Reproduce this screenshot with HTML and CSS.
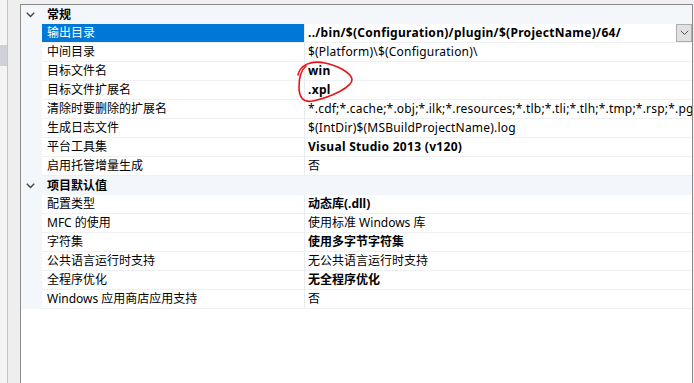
FILE: index.html
```html
<!DOCTYPE html>
<html lang="zh-CN">
<head>
<meta charset="utf-8">
<title>属性页</title>
<link rel="stylesheet" href="styles.css">
</head>
<body>
<div class="app">
  <div class="rail"><div class="rail-sel"></div></div>
  <div class="strip"></div>
  <div class="panel">
    <div class="group">
      <span class="gutter"><svg class="chev" width="9" height="6" viewBox="0 0 9 6"><path d="M0.8 0.8 L4.5 4.6 L8.2 0.8" fill="none" stroke="#444" stroke-width="1.4"/></svg></span>
      <span class="group-label">常规</span>
    </div>
    <div class="row selected">
      <span class="gutter"></span>
      <span class="name">输出目录</span>
      <span class="value"><span class="vtext b lat">../bin/$(Configuration)/plugin/$(ProjectName)/64/</span><span class="drop"><svg width="9" height="6" viewBox="0 0 9 6"><path d="M0.8 0.8 L4.5 4.5 L8.2 0.8" fill="none" stroke="#555" stroke-width="1"/></svg></span></span>
    </div>
    <div class="row"><span class="gutter"></span><span class="name">中间目录</span><span class="value"><span class="vtext lat">$(Platform)\$(Configuration)\</span></span></div>
    <div class="row"><span class="gutter"></span><span class="name">目标文件名</span><span class="value"><span class="vtext b lat">win</span></span></div>
    <div class="row"><span class="gutter"></span><span class="name">目标文件扩展名</span><span class="value"><span class="vtext b lat">.xpl</span></span></div>
    <div class="row"><span class="gutter"></span><span class="name">清除时要删除的扩展名</span><span class="value"><span class="vtext lat">*.cdf;*.cache;*.obj;*.ilk;*.resources;*.tlb;*.tli;*.tlh;*.tmp;*.rsp;*.pgc;*.pgd;*.meta;$(TargetPath)</span></span></div>
    <div class="row"><span class="gutter"></span><span class="name">生成日志文件</span><span class="value"><span class="vtext lat">$(IntDir)$(MSBuildProjectName).log</span></span></div>
    <div class="row"><span class="gutter"></span><span class="name">平台工具集</span><span class="value"><span class="vtext b lat">Visual Studio 2013 (v120)</span></span></div>
    <div class="row"><span class="gutter"></span><span class="name">启用托管增量生成</span><span class="value"><span class="vtext">否</span></span></div>
    <div class="group">
      <span class="gutter"><svg class="chev" width="9" height="6" viewBox="0 0 9 6"><path d="M0.8 0.8 L4.5 4.6 L8.2 0.8" fill="none" stroke="#444" stroke-width="1.4"/></svg></span>
      <span class="group-label">项目默认值</span>
    </div>
    <div class="row"><span class="gutter"></span><span class="name">配置类型</span><span class="value"><span class="vtext b">动态库(.dll)</span></span></div>
    <div class="row"><span class="gutter"></span><span class="name">MFC 的使用</span><span class="value"><span class="vtext">使用标准 Windows 库</span></span></div>
    <div class="row"><span class="gutter"></span><span class="name">字符集</span><span class="value"><span class="vtext b">使用多字节字符集</span></span></div>
    <div class="row"><span class="gutter"></span><span class="name">公共语言运行时支持</span><span class="value"><span class="vtext">无公共语言运行时支持</span></span></div>
    <div class="row"><span class="gutter"></span><span class="name">全程序优化</span><span class="value"><span class="vtext b">无全程序优化</span></span></div>
    <div class="row"><span class="gutter"></span><span class="name">Windows 应用商店应用支持</span><span class="value"><span class="vtext">否</span></span></div>
  </div>
  <svg class="annot" width="694" height="383" viewBox="0 0 694 383"><path d="M298 75 C300 65 311 60 325 63 C338 66 350 72 352 79 C353 87 331 97 313 101 C303 103 299 97 299 87 C299 79 301 70 306 66" fill="none" stroke="#e5141b" stroke-width="1.6" stroke-linecap="round"/></svg>
</div>
</body>
</html>
```

FILE: styles.css
```css
html, body {
  margin: 0;
  padding: 0;
}
body {
  width: 694px;
  height: 383px;
  overflow: hidden;
  background: #f0f0f0;
  font-family: "Noto Sans", "Noto Sans CJK SC", sans-serif;
  font-size: 12px;
  color: #000;
}
.app {
  position: relative;
  display: flex;
  height: 383px;
}
.rail {
  width: 8px;
  background: #f4f4f4;
  border-right: 1px solid #c4c4c4;
  padding-top: 45px;
  box-sizing: border-box;
  flex: none;
}
.rail-sel {
  width: 7px;
  height: 21px;
  background: #cfd0da;
}
.strip {
  width: 12px;
  background: #eeeeee;
  flex: none;
}
.panel {
  flex: 1;
  margin-top: 4px;
  margin-right: 1px;
  border: 1px solid #8c8c8c;
  border-bottom: none;
  background: #fff;
  display: flex;
  flex-direction: column;
  min-width: 0;
}
.group, .row {
  display: flex;
  height: 19px;
  flex: none;
}
.group {
  background: #f3f6fb;
  align-items: center;
}
.gutter {
  width: 21px;
  flex: none;
  background: #f3f6fb;
  align-self: stretch;
  display: flex;
  align-items: center;
  justify-content: center;
  padding-right: 2px;
  box-sizing: border-box;
}
.chev {
  display: block;
}
.group-label {
  padding-left: 5px;
  font-weight: bold;
  line-height: 19px;
}
.name {
  width: 262px;
  flex: none;
  box-sizing: border-box;
  padding-left: 5px;
  line-height: 18px;
  border-bottom: 1px solid #eef0f4;
  white-space: nowrap;
  overflow: hidden;
}
.value {
  flex: 1;
  min-width: 0;
  display: flex;
  border-left: 1px solid #e9ebf0;
  border-bottom: 1px solid #eef0f4;
  padding-left: 3px;
}
.vtext {
  flex: 1;
  min-width: 0;
  white-space: nowrap;
  overflow: hidden;
  line-height: 18px;
}
.lat {
  letter-spacing: 0.2px;
}
.b {
  font-weight: bold;
}
.b.lat {
  letter-spacing: 0.3px;
}
.selected .name {
  background: #0078d7;
  color: #fff;
}
.drop {
  width: 14px;
  height: 16px;
  flex: none;
  background: #e1e1e1;
  border: 1px solid #adadad;
  display: flex;
  align-items: center;
  justify-content: center;
}
.annot {
  position: absolute;
  left: 0;
  top: 0;
  pointer-events: none;
}
```
